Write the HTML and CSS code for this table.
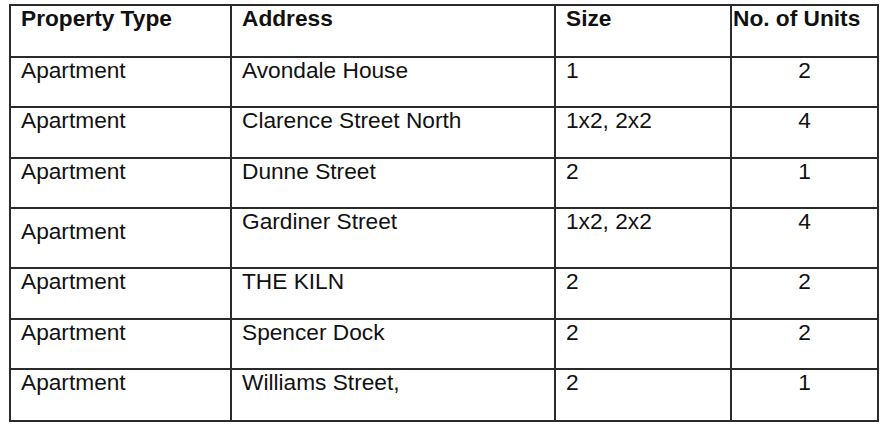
FILE: index.html
```html
<!DOCTYPE html>
<html>
<head>
<meta charset="utf-8">
<link rel="stylesheet" href="styles.css">
</head>
<body>
<table class="units">
  <colgroup>
    <col class="c-type">
    <col class="c-addr">
    <col class="c-size">
    <col class="c-num">
  </colgroup>
  <tr class="head h52">
    <th>Property Type</th>
    <th>Address</th>
    <th>Size</th>
    <th class="num-head">No. of Units</th>
  </tr>
  <tr class="h50"><td>Apartment</td><td>Avondale House</td><td>1</td><td class="num">2</td></tr>
  <tr class="h51"><td>Apartment</td><td>Clarence Street North</td><td>1x2, 2x2</td><td class="num">4</td></tr>
  <tr class="h50"><td>Apartment</td><td>Dunne Street</td><td>2</td><td class="num">1</td></tr>
  <tr class="h60"><td class="low">Apartment</td><td>Gardiner Street</td><td>1x2, 2x2</td><td class="num">4</td></tr>
  <tr class="h51"><td>Apartment</td><td>THE KILN</td><td>2</td><td class="num">2</td></tr>
  <tr class="h50"><td>Apartment</td><td>Spencer Dock</td><td>2</td><td class="num">2</td></tr>
  <tr class="h52"><td>Apartment</td><td>Williams Street,</td><td>2</td><td class="num">1</td></tr>
</table>
</body>
</html>
```
FILE: styles.css
```css
html, body {
  margin: 0;
  padding: 0;
  background: #ffffff;
}
body {
  font-family: "Liberation Sans", Arial, sans-serif;
  font-size: 22.7px;
  color: #111;
}
.units {
  border-collapse: collapse;
  table-layout: fixed;
  width: 868px;
  margin: 4px 0 0 9px;
}
.c-type { width: 221px; }
.c-addr { width: 324px; }
.c-size { width: 176px; }
.c-num { width: 147px; }
.units th,
.units td {
  border: 2px solid #2b2b2b;
  padding: 0 0 0 10px;
  vertical-align: top;
  text-align: left;
  line-height: 25px;
  white-space: nowrap;
}
.units th { font-weight: bold; }
.units th.num-head { padding-left: 1px; }
.units td.num { text-align: center; padding-left: 0; }
.units td.low { padding-top: 10px; }
.h50 { height: 50px; }
.h51 { height: 51px; }
.h52 { height: 52px; }
.h60 { height: 60px; }
```
